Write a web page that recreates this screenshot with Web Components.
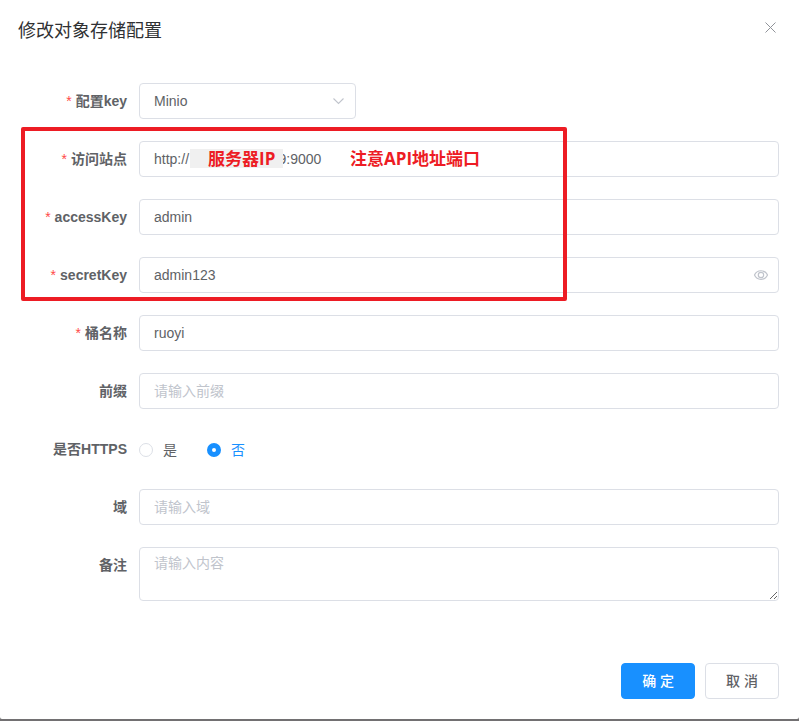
<!DOCTYPE html>
<html lang="zh-CN">
<head>
<meta charset="utf-8">
<meta name="viewport" content="width=device-width, initial-scale=1">
<title>修改对象存储配置</title>
<style>
  body {
    margin: 0;
    min-height: 100vh;
    background: #727072;
    color: #606266;
    font: 14px/36px "Liberation Sans", "Noto Sans CJK SC", sans-serif;
  }
</style>
</head>
<body>
<config-dialog heading="修改对象存储配置">
  <select-row label="配置key" required options="Minio"></select-row>
  <text-row label="访问站点" required value="http://&nbsp;&nbsp;&nbsp;&nbsp;&nbsp;&nbsp;&nbsp;&nbsp;&nbsp;&nbsp;&nbsp;&nbsp;&nbsp;&nbsp;&nbsp;&nbsp;&nbsp;&nbsp;&nbsp;&nbsp;&nbsp;&nbsp;&nbsp;9:9000">
    <field-note masked style="left:51px">服务器IP</field-note>
    <field-note style="left:211px">注意API地址端口</field-note>
  </text-row>
  <text-row label="accessKey" required value="admin"></text-row>
  <text-row label="secretKey" required value="admin123" reveal></text-row>
  <text-row label="桶名称" required value="ruoyi"></text-row>
  <text-row label="前缀" placeholder="请输入前缀"></text-row>
  <radio-row label="是否HTTPS" options="是,否" selected="否"></radio-row>
  <text-row label="域" placeholder="请输入域"></text-row>
  <area-row label="备注" placeholder="请输入内容"></area-row>
  <highlight-frame slot="overlay"></highlight-frame>
  <action-button slot="footer" primary>确 定</action-button>
  <action-button slot="footer">取 消</action-button>
</config-dialog>

<script>
class ConfigDialog extends HTMLElement {
  connectedCallback() {
    this.attachShadow({ mode: 'open' }).innerHTML = `
      <style>
        :host { display: block; background: #fff; border-radius: 0 0 2px 2px; }
        header { display: flex; justify-content: space-between; align-items: flex-start; padding: 18px 20px 9px 18px; }
        h1 { margin: 0; font-size: 18px; font-weight: 400; line-height: 26px; color: #303133; }
        header button { display: flex; margin: 0; padding: 1px 0; border: 0; background: none; color: #909399; cursor: pointer; }
        form { position: relative; padding: 30px 20px 30px 19px; display: flex; flex-direction: column; gap: 22px; }
        footer { display: flex; justify-content: flex-end; gap: 10px; padding: 32px 20px 20px; }
      </style>
      <header>
        <h1></h1>
        <button type="button" aria-label="关闭">
          <svg width="16" height="16" viewBox="0 0 16 16" fill="none" stroke="currentColor"><path d="M2.500 3.500l10 10M12.500 3.500l-10 10"/></svg>
        </button>
      </header>
      <form><slot></slot><slot name="overlay"></slot></form>
      <footer><slot name="footer"></slot></footer>`;
    this.shadowRoot.querySelector('h1').textContent = this.getAttribute('heading');
  }
}

const rowStyles = `
  :host { display: flex; }
  .label { box-sizing: border-box; flex: 0 0 120px; padding-right: 12px; text-align: right; font-weight: 700; line-height: 36px; white-space: nowrap; }
  :host([required]) .label::before { content: "*"; margin-right: 4px; color: #ff4949; font-weight: 400; }
  .content { position: relative; flex: 1; min-width: 0; display: flex; align-items: center; }
  input[type=text], select, textarea {
    box-sizing: border-box; width: 100%; height: 36px; margin: 0; padding: 0 14px;
    border: 1px solid #dcdfe6; border-radius: 4px; background: #fff; color: #606266;
    font: inherit; line-height: 34px; outline: none;
  }
  ::placeholder { color: #c0c4cc; opacity: 1; }
`;

class FormRow extends HTMLElement {
  connectedCallback() {
    this.attachShadow({ mode: 'open' }).innerHTML = `
      <style>${rowStyles}${this.styles()}</style>
      <label class="label" id="name" for="control"></label>
      <div class="content">${this.control()}<slot></slot></div>`;
    this.shadowRoot.querySelector('.label').textContent = this.getAttribute('label');
    this.ready();
  }
  styles() { return ''; }
  ready() {}
}

class TextRow extends FormRow {
  styles() {
    return `
      :host([reveal]) input { padding-right: 40px; }
      button { position: absolute; right: 10px; display: flex; padding: 0; border: 0; background: none; color: #c0c4cc; cursor: pointer; }`;
  }
  control() {
    const eye = `
      <button type="button" aria-label="显示密码">
        <svg width="16" height="16" viewBox="0 0 16 16" fill="none" stroke="currentColor" stroke-width="1.2">
          <path d="M1.500 8C4 2.300 12 2.300 14.500 8C12 13.700 4 13.700 1.500 8Z"/><circle cx="8" cy="8" r="2.700"/>
        </svg>
      </button>`;
    return `<input type="text" id="control">${this.hasAttribute('reveal') ? eye : ''}`;
  }
  ready() {
    const input = this.shadowRoot.querySelector('input');
    input.value = this.getAttribute('value') || '';
    input.placeholder = this.getAttribute('placeholder') || '';
  }
}

class SelectRow extends FormRow {
  styles() {
    return `
      .content { flex: 0 1 217px; }
      select { appearance: none; padding-right: 30px; }
      svg { position: absolute; right: 10px; color: #c0c4cc; pointer-events: none; }`;
  }
  control() {
    const options = this.getAttribute('options').split(',').map(o => `<option>${o}</option>`).join('');
    return `<select id="control">${options}</select>
      <svg width="14" height="14" viewBox="0 0 14 14" fill="none" stroke="currentColor" stroke-width="1.1"><path d="M1.500 4.500L6.500 9.500l5-5"/></svg>`;
  }
}

class RadioRow extends FormRow {
  styles() {
    return `
      .content { gap: 30px; padding-top: 2px; }
      .option { display: flex; align-items: center; gap: 10px; line-height: 20px; cursor: pointer; }
      input { appearance: none; box-sizing: border-box; width: 14px; height: 14px; margin: 0; border: 1px solid #dcdfe6; border-radius: 50%; background: #fff; }
      input:checked { border: 5px solid #1890ff; }
      .option:has(:checked) { color: #1890ff; }`;
  }
  control() {
    const selected = this.getAttribute('selected');
    return this.getAttribute('options').split(',').map((o, i) =>
      `<label class="option"><input type="radio" name="choice" value="${o}" ${i ? '' : 'id="control"'} ${o === selected ? 'checked' : ''}>${o}</label>`).join('');
  }
  ready() {
    const content = this.shadowRoot.querySelector('.content');
    content.setAttribute('role', 'radiogroup');
    content.setAttribute('aria-labelledby', 'name');
  }
}

class AreaRow extends FormRow {
  styles() {
    return `textarea { display: block; height: auto; padding: 5px 14px; line-height: 21px; resize: vertical; }`;
  }
  control() { return '<textarea id="control" rows="2"></textarea>'; }
  ready() {
    this.shadowRoot.querySelector('textarea').placeholder = this.getAttribute('placeholder') || '';
  }
}

class FieldNote extends HTMLElement {
  connectedCallback() {
    this.attachShadow({ mode: 'open' }).innerHTML = `
      <style>
        :host {
          position: absolute; top: 8px; box-sizing: border-box; height: 19px; white-space: nowrap;
          color: #ed1c24; font: 700 17px/19px "Open Sans", "Noto Sans CJK SC", sans-serif; pointer-events: none;
        }
        :host([masked]) { width: 93px; padding-left: 18px; background: #f0f0f0; }
      </style><slot></slot>`;
  }
}

class HighlightFrame extends HTMLElement {
  connectedCallback() {
    this.attachShadow({ mode: 'open' }).innerHTML = `
      <style>
        :host {
          position: absolute; left: 21px; top: 74px; box-sizing: border-box; width: 546px; height: 174px;
          border: 4px solid #ed1c24; border-radius: 2px; pointer-events: none;
        }
      </style>`;
  }
}

class ActionButton extends HTMLElement {
  connectedCallback() {
    this.attachShadow({ mode: 'open' }).innerHTML = `
      <style>
        :host { display: block; }
        button {
          display: block; margin: 0; padding: 10px 20px; border: 1px solid #dcdfe6; border-radius: 4px;
          background: #fff; color: #606266; font: inherit; font-weight: 500; line-height: 14px; cursor: pointer;
        }
        :host([primary]) button { border-color: #1890ff; background: #1890ff; color: #fff; }
      </style>
      <button type="button"><slot></slot></button>`;
  }
}

customElements.define('config-dialog', ConfigDialog);
customElements.define('text-row', TextRow);
customElements.define('select-row', SelectRow);
customElements.define('radio-row', RadioRow);
customElements.define('area-row', AreaRow);
customElements.define('field-note', FieldNote);
customElements.define('highlight-frame', HighlightFrame);
customElements.define('action-button', ActionButton);
</script>
</body>
</html>
